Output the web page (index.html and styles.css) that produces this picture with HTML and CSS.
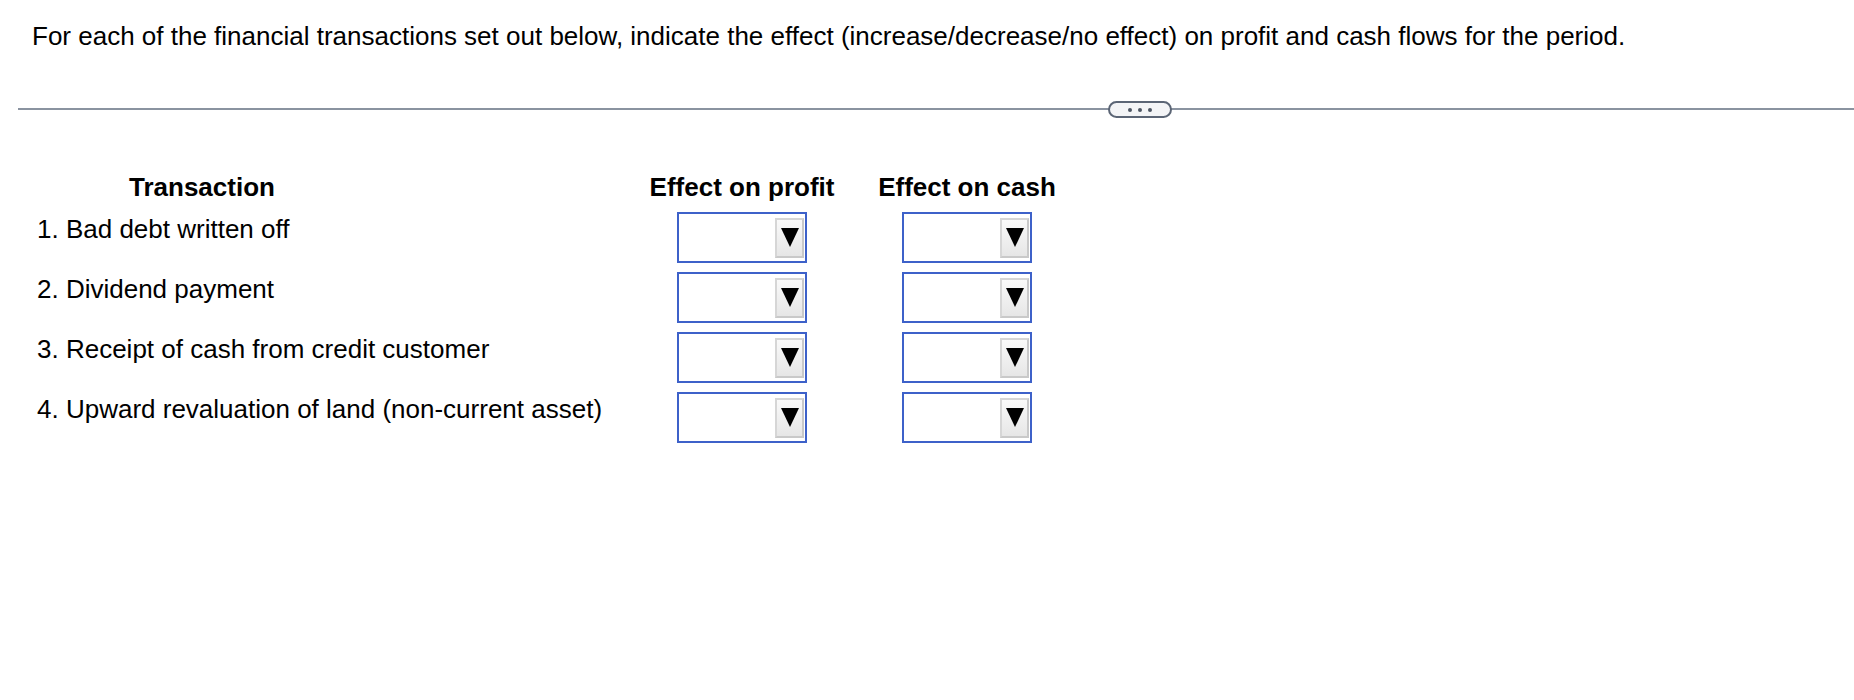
FILE: index.html
```html
<!DOCTYPE html>
<html lang="en">
<head>
<meta charset="utf-8">
<title>Transactions</title>
<link rel="stylesheet" href="styles.css">
</head>
<body>
<p class="prompt">For each of the financial transactions set out below, indicate the effect (increase/decrease/no effect) on profit and cash flows for the period.</p>

<div class="divider">
  <span class="pill"><i></i><i></i><i></i></span>
</div>

<div class="table">
  <div class="th th-first">Transaction</div>
  <div class="th th-center">Effect on profit</div>
  <div class="th th-center">Effect on cash</div>

  <div class="label">1. Bad debt written off</div>
  <div class="select"><span class="btn"><svg viewBox="0 0 18 19" width="18" height="19"><polygon points="0,0 18,0 9,19" fill="#000"/></svg></span></div>
  <div class="select"><span class="btn"><svg viewBox="0 0 18 19" width="18" height="19"><polygon points="0,0 18,0 9,19" fill="#000"/></svg></span></div>

  <div class="label">2. Dividend payment</div>
  <div class="select"><span class="btn"><svg viewBox="0 0 18 19" width="18" height="19"><polygon points="0,0 18,0 9,19" fill="#000"/></svg></span></div>
  <div class="select"><span class="btn"><svg viewBox="0 0 18 19" width="18" height="19"><polygon points="0,0 18,0 9,19" fill="#000"/></svg></span></div>

  <div class="label">3. Receipt of cash from credit customer</div>
  <div class="select"><span class="btn"><svg viewBox="0 0 18 19" width="18" height="19"><polygon points="0,0 18,0 9,19" fill="#000"/></svg></span></div>
  <div class="select"><span class="btn"><svg viewBox="0 0 18 19" width="18" height="19"><polygon points="0,0 18,0 9,19" fill="#000"/></svg></span></div>

  <div class="label">4. Upward revaluation of land (non-current asset)</div>
  <div class="select"><span class="btn"><svg viewBox="0 0 18 19" width="18" height="19"><polygon points="0,0 18,0 9,19" fill="#000"/></svg></span></div>
  <div class="select"><span class="btn"><svg viewBox="0 0 18 19" width="18" height="19"><polygon points="0,0 18,0 9,19" fill="#000"/></svg></span></div>
</div>
</body>
</html>
```

FILE: styles.css
```css
html, body {
  margin: 0;
  padding: 0;
  background: #fff;
}
body {
  font-family: "Liberation Sans", Arial, Helvetica, sans-serif;
  font-size: 26px;
  line-height: 30px;
  color: #000;
  overflow: hidden;
}
.prompt {
  margin: 21px 0 0 32px;
  white-space: nowrap;
}
.divider {
  margin: 57px 0 0 18px;
  height: 2px;
  background: #8a93a0;
  position: relative;
}
.pill {
  position: absolute;
  left: 1090px;
  top: -7px;
  box-sizing: border-box;
  width: 64px;
  height: 17px;
  border: 2px solid #5b6575;
  border-radius: 9px;
  background: #f3f4f6;
  display: flex;
  align-items: center;
  justify-content: center;
  gap: 6px;
}
.pill i {
  width: 4px;
  height: 4px;
  border-radius: 50%;
  background: #4d5563;
}
.table {
  display: grid;
  grid-template-columns: 545px 130px 130px;
  grid-template-rows: 31px repeat(4, 51px);
  column-gap: 95px;
  row-gap: 9px;
  margin: 62px 0 0 37px;
}
.th {
  font-weight: bold;
  white-space: nowrap;
}
.th-first {
  padding-left: 92px;
}
.th-center {
  display: flex;
  justify-content: center;
}
.label {
  padding-top: 2px;
  white-space: nowrap;
}
.select {
  box-sizing: border-box;
  border: 2px solid #3d61c9;
  background: #fff;
  display: flex;
  justify-content: flex-end;
  align-items: flex-start;
  padding: 4px 1px 0 0;
}
.btn {
  box-sizing: border-box;
  width: 29px;
  height: 40px;
  border: 2px solid #c9c9c9;
  border-top-color: #d6d6d6;
  border-left-color: #d6d6d6;
  background: linear-gradient(#fafafa, #e6e6e6);
  display: flex;
  justify-content: center;
  padding-top: 8px;
}
.btn svg {
  display: block;
}
```
